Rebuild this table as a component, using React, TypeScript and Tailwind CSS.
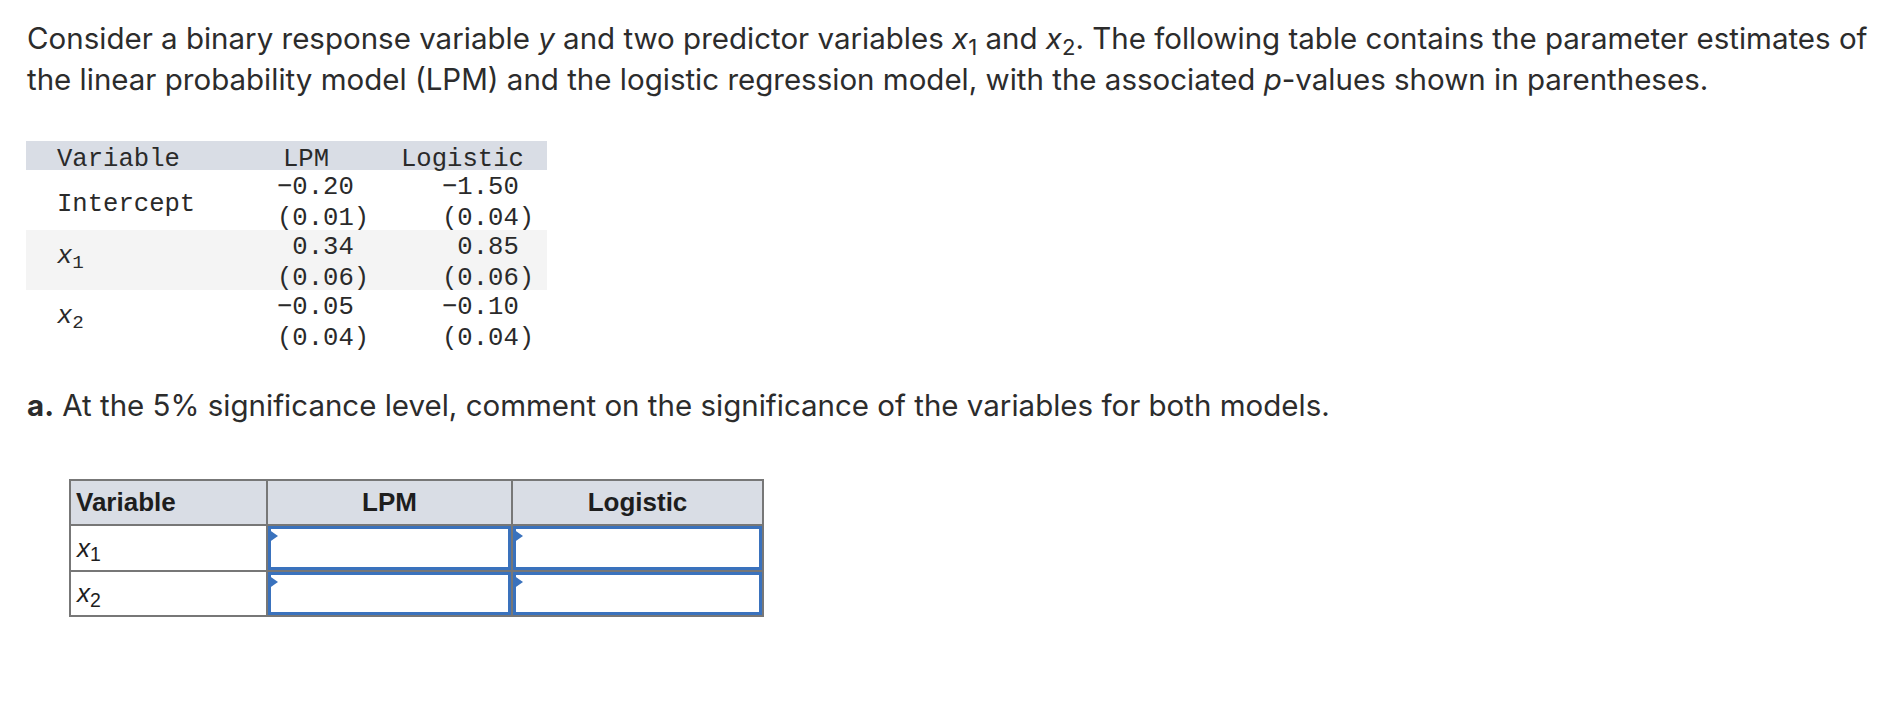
import type { ReactNode } from "react";

type EstimateRow = {
  key: string;
  label: ReactNode;
  lpm: [string, string];
  logistic: [string, string];
  isVar?: boolean;
  shaded?: boolean;
};

function Xsub({ n }: { n: number }) {
  return (
    <span className="whitespace-nowrap">
      <i>x</i>
      <sub>{n}</sub>
    </span>
  );
}

// positive numbers get a leading space so the digits line up under the parens
const estimates: EstimateRow[] = [
  { key: "int", label: "Intercept", lpm: ["−0.20", "(0.01)"], logistic: ["−1.50", "(0.04)"] },
  { key: "x1", label: <Xsub n={1} />, lpm: [" 0.34", "(0.06)"], logistic: [" 0.85", "(0.06)"], isVar: true, shaded: true },
  { key: "x2", label: <Xsub n={2} />, lpm: ["−0.05", "(0.04)"], logistic: ["−0.10", "(0.04)"], isVar: true },
];

function AnswerBox() {
  // blue input box with the little flag in the corner
  return (
    <div className="h-full bg-white">
      <div className="relative h-full border-[3px] border-[#3a72bd]">
        <span className="absolute -left-[3px] top-0 h-0 w-0 border-y-[7px] border-l-[10px] border-y-transparent border-l-[#3a72bd]" />
      </div>
    </div>
  );
}

export default function App() {
  return (
    <div className="h-[714px] w-full bg-white pl-[27px] pt-[18px] font-['Inter',sans-serif] text-[#2c2c2c]">
      <p className="text-[29.5px] leading-[41px]">
        <span className="whitespace-nowrap">
          Consider a binary response variable <i>y</i> and two predictor variables <Xsub n={1} /> and{" "}
          <Xsub n={2} />. The following table contains the parameter estimates of
        </span>
        <br />
        the linear probability model (LPM) and the logistic regression model, with the associated{" "}
        <i>p</i>-values shown in parentheses.
      </p>

      <div className="-ml-px mt-[41px] w-[521px] font-['Liberation_Mono',monospace] text-[25.6px] text-[#2a2a2a]">
        <div className="flex h-[29px] items-center bg-[#d9dde5] pt-[7px] leading-[29px]">
          <div className="w-[224px] pl-[31px]">Variable</div>
          <div className="w-[146px] pl-[33px]">LPM</div>
          <div className="w-[151px] pl-[5px]">Logistic</div>
        </div>
        {estimates.map((r) => (
          <div
            key={r.key}
            className={r.shaded ? "flex h-[60px] items-start bg-[#f4f4f4]" : "flex h-[60px] items-start"}
          >
            <div className={r.isVar ? "w-[224px] pl-[31px] leading-[54px]" : "w-[224px] pl-[31px] pt-[5px] leading-[60px]"}>
              {r.label}
            </div>
            <div className="w-[146px] whitespace-pre pl-[27px] pt-[2px] leading-[31px]">
              <div>{r.lpm[0]}</div>
              <div>{r.lpm[1]}</div>
            </div>
            <div className="w-[151px] whitespace-pre pl-[46px] pt-[2px] leading-[31px]">
              <div>{r.logistic[0]}</div>
              <div>{r.logistic[1]}</div>
            </div>
          </div>
        ))}
      </div>

      <p className="mt-[35px] text-[29.5px] leading-[41px]">
        <b>a.</b> At the 5% significance level, comment on the significance of the variables for both models.
      </p>

      <div className="ml-[42px] mt-[53px] grid w-[695px] grid-cols-[195px_243px_249px] grid-rows-[43px_44px_43px] gap-[2px] bg-[#777] p-[2px] font-['Liberation_Sans',sans-serif] text-[26px] text-[#1e1e1e]">
        <div className="flex items-center bg-[#d9dde5] pl-[5px] font-bold">Variable</div>
        <div className="flex items-center justify-center bg-[#d9dde5] font-bold">LPM</div>
        <div className="flex items-center justify-center bg-[#d9dde5] font-bold">Logistic</div>

        <div className="flex items-center bg-white pl-[6px]">
          <Xsub n={1} />
        </div>
        <AnswerBox />
        <AnswerBox />

        <div className="flex items-center bg-white pl-[6px]">
          <Xsub n={2} />
        </div>
        <AnswerBox />
        <AnswerBox />
      </div>
    </div>
  );
}
